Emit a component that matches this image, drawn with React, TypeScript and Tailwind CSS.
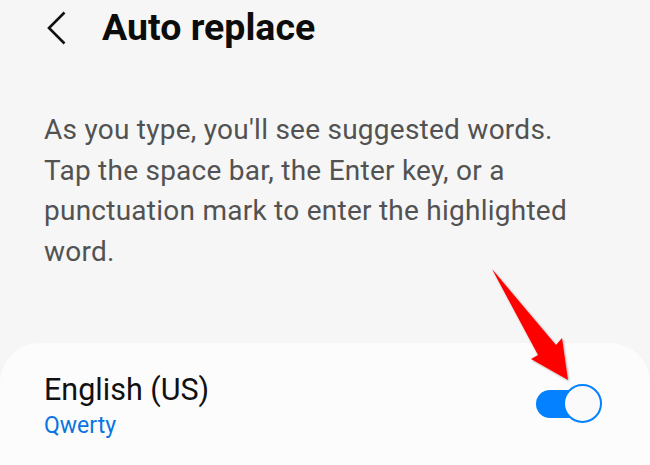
function Toggle() {
  return (
    <div className="relative w-[66px] h-[40px] shrink-0">
      <div className="absolute left-0 top-[6px] w-[48px] h-[28px] rounded-full bg-[#0381fe]" />
      <div className="absolute right-0 top-0 w-[39px] h-[39px] rounded-full bg-[#fafafa] border-2 border-[#0381fe]" />
    </div>
  );
}

function Arrow() {
  return (
    <svg className="absolute left-0 top-0 pointer-events-none" width="650" height="465" viewBox="0 0 650 465">
      <defs>
        <filter id="sh" x="-20%" y="-20%" width="140%" height="140%">
          <feDropShadow dx="1" dy="1" stdDeviation="1.2" floodColor="#000" floodOpacity="0.35" />
        </filter>
      </defs>
      <polygon
        points="492,269 556,345 562,338 568,380 531,359 538,355"
        fill="#ff0000"
        filter="url(#sh)"
      />
    </svg>
  );
}

export default function App() {
  return (
    <div
      className="relative w-[650px] h-[465px] overflow-hidden bg-[#f6f6f6] flex flex-col"
      style={{ fontFamily: "Roboto, 'Liberation Sans', sans-serif" }}
    >
      {/* Header */}
      <div className="h-[56px] shrink-0 flex items-center">
        <svg width="20" height="34" viewBox="0 0 20 34" className="ml-[47px] shrink-0">
          <polyline points="17.5,1.5 2,17 17.5,32.5" fill="none" stroke="#111" strokeWidth="2.6" />
        </svg>
        <h1 className="ml-[35px] text-[37.5px] font-bold text-[#0c0c0c] leading-none">Auto replace</h1>
      </div>

      {/* Description */}
      <p className="mt-[54px] px-[44px] text-[28px] leading-[40.5px] tracking-[0.25px] text-[#525252] whitespace-nowrap">
        As you type, you'll see suggested words.
        <br />
        Tap the space bar, the Enter key, or a
        <br />
        punctuation mark to enter the highlighted
        <br />
        word.
      </p>

      {/* Language card */}
      <div className="mt-[71px] flex-1 rounded-t-[40px] bg-[#fcfcfc] pl-[44px] pr-[48px] pt-[28px] flex items-start justify-between">
        <div className="flex flex-col">
          <span className="text-[30.5px] leading-[38px] text-[#111]">English (US)</span>
          <span className="mt-[2px] text-[23px] leading-[30px] text-[#0a74e1]">Qwerty</span>
        </div>
        <div className="mt-[13px]">
          <Toggle />
        </div>
      </div>

      <Arrow />
    </div>
  );
}
